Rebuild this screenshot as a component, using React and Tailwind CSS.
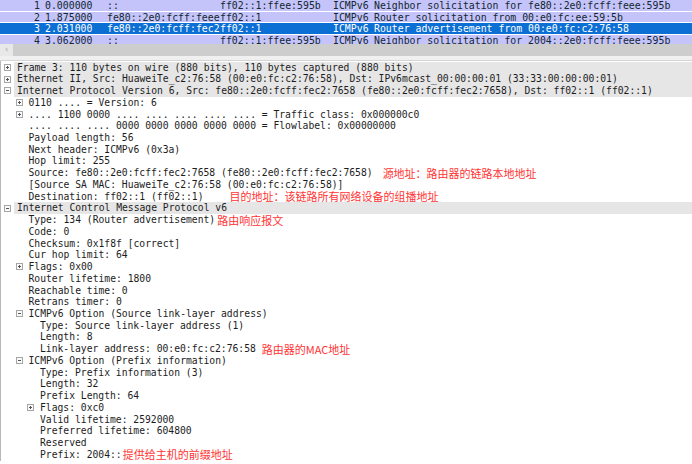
import React from 'react';

const packets = [
  { no: '1', time: '0.000000', src: '::', dst: 'ff02::1:ffee:595b', proto: 'ICMPv6', info: 'Neighbor solicitation for fe80::2e0:fcff:feee:595b' },
  { no: '2', time: '1.875000', src: 'fe80::2e0:fcff:feee:595b', dst: 'ff02::1', proto: 'ICMPv6', info: 'Router solicitation from 00:e0:fc:ee:59:5b' },
  { no: '3', time: '2.031000', src: 'fe80::2e0:fcff:fec2:7658', dst: 'ff02::1', proto: 'ICMPv6', info: 'Router advertisement from 00:e0:fc:c2:76:58', selected: true },
  { no: '4', time: '3.062000', src: '::', dst: 'ff02::1:ffee:595b', proto: 'ICMPv6', info: 'Neighbor solicitation for 2004::2e0:fcff:feee:595b' },
];

// level, expander ('+', '-', null), text, header row?, note, note margin
const tree = [
  [0, '+', 'Frame 3: 110 bytes on wire (880 bits), 110 bytes captured (880 bits)', true],
  [0, '+', 'Ethernet II, Src: HuaweiTe_c2:76:58 (00:e0:fc:c2:76:58), Dst: IPv6mcast_00:00:00:01 (33:33:00:00:00:01)', true],
  [0, '-', 'Internet Protocol Version 6, Src: fe80::2e0:fcff:fec2:7658 (fe80::2e0:fcff:fec2:7658), Dst: ff02::1 (ff02::1)', true],
  [1, '+', '0110 .... = Version: 6'],
  [1, '+', '.... 1100 0000 .... .... .... .... .... = Traffic class: 0x000000c0'],
  [1, null, '.... .... .... 0000 0000 0000 0000 0000 = Flowlabel: 0x00000000'],
  [1, null, 'Payload length: 56'],
  [1, null, 'Next header: ICMPv6 (0x3a)'],
  [1, null, 'Hop limit: 255'],
  [1, null, 'Source: fe80::2e0:fcff:fec2:7658 (fe80::2e0:fcff:fec2:7658)', false, '源地址：路由器的链路本地地址', 'ml-[10px]'],
  [1, null, '[Source SA MAC: HuaweiTe_c2:76:58 (00:e0:fc:c2:76:58)]'],
  [1, null, 'Destination: ff02::1 (ff02::1)', false, '目的地址：该链路所有网络设备的组播地址', 'ml-[26px]'],
  [0, '-', 'Internet Control Message Protocol v6', true],
  [1, null, 'Type: 134 (Router advertisement)', false, '路由响应报文', 'ml-[2px]'],
  [1, null, 'Code: 0'],
  [1, null, 'Checksum: 0x1f8f [correct]'],
  [1, null, 'Cur hop limit: 64'],
  [1, '+', 'Flags: 0x00'],
  [1, null, 'Router lifetime: 1800'],
  [1, null, 'Reachable time: 0'],
  [1, null, 'Retrans timer: 0'],
  [1, '-', 'ICMPv6 Option (Source link-layer address)'],
  [2, null, 'Type: Source link-layer address (1)'],
  [2, null, 'Length: 8'],
  [2, null, 'Link-layer address: 00:e0:fc:c2:76:58', false, '路由器的MAC地址', 'ml-[6px]'],
  [1, '-', 'ICMPv6 Option (Prefix information)'],
  [2, null, 'Type: Prefix information (3)'],
  [2, null, 'Length: 32'],
  [2, null, 'Prefix Length: 64'],
  [2, '+', 'Flags: 0xc0'],
  [2, null, 'Valid lifetime: 2592000'],
  [2, null, 'Preferred lifetime: 604800'],
  [2, null, 'Reserved'],
  [2, null, 'Prefix: 2004::', false, '提供给主机的前缀地址', 'ml-[1px]'],
];

const indent = ['pl-0', 'pl-[11.5px]', 'pl-[23px]'];

const Expander = ({ sign }) => (
  <span className="relative w-[7px] h-[7px] border border-[#a6a6a6] bg-[#fafafa]">
    <span className="absolute left-[1px] top-[2px] w-[3px] h-px bg-[#555]" />
    {sign === '+' && <span className="absolute left-[2px] top-[1px] w-px h-[3px] bg-[#555]" />}
  </span>
);

export default function App() {
  return (
    <div className="w-[692px] h-[464px] overflow-hidden bg-white font-['DejaVu_Sans_Mono',monospace] text-[9.7px] text-[#1c1c1c]">
      <div className="h-[44px] overflow-hidden text-[9.85px]">
        {packets.map((p) => (
          <div
            key={p.no}
            className={`flex h-[11.7px] leading-[11.5px] whitespace-pre border-b border-white ${
              p.selected ? 'bg-[#0b6fd3] text-white' : 'bg-[#c4c4fb] text-[#12272e]'
            }`}
          >
            <span className="w-[40px] text-right">{p.no}</span>
            <span className="w-[67px] pl-[5px]">{p.time}</span>
            <span className="w-[113px] overflow-hidden">{p.src}</span>
            <span className="w-[113px] overflow-hidden">{p.dst}</span>
            <span className="w-[41px]">{p.proto}</span>
            <span className="flex-1">{p.info}</span>
          </div>
        ))}
      </div>
      <div className="flex h-[12px]">
        <div className="w-[13px] bg-[#e8e8e8] flex items-center justify-center text-[#a8a8a8] text-[9px] font-['DejaVu_Sans',sans-serif]">‹</div>
        <div className="flex-1 bg-[#cdcdcd]" />
      </div>
      <div className="h-[5px] bg-[#f0f0f0] border-b border-[#d4d4d4]" />
      <div className="border-l border-[#b8b8b8] pt-[0.6px]">
        {tree.map(([level, sign, text, header, note, noteMl], i) => (
          <div key={i} className={`flex items-center h-[11.74px] whitespace-pre ${indent[level]}`}>
            <span className="w-[13px] h-full flex items-center pl-[3px]">
              {sign && <Expander sign={sign} />}
            </span>
            <span className={`flex-1 flex items-center h-full pl-[3px] ${header ? 'bg-[#e6e6e6]' : ''}`}>
              <span className="leading-[11.74px]">{text}</span>
              {note && (
                <span className={`${noteMl} font-['Noto_Sans_CJK_SC',sans-serif] text-[11px] leading-none text-[#ff3333]`}>
                  {note}
                </span>
              )}
            </span>
          </div>
        ))}
      </div>
    </div>
  );
}
